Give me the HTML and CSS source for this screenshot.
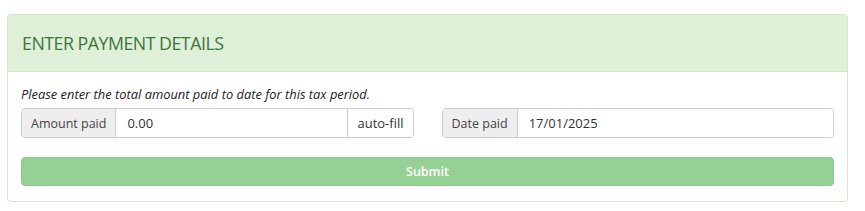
FILE: index.html
```html
<!DOCTYPE html>
<html>
<head>
  <title>Payment Details</title>
  <link rel="stylesheet" href="styles.css">
</head>
<body>

  <div class="panel">
    <div class="panel-heading">
      <h3>ENTER PAYMENT DETAILS</h3>
    </div>
    <div class="panel-body">
      <p class="hint">Please enter the total amount paid to date for this tax period.</p>
      <div class="row">
        <div class="input-group">
          <span class="addon">Amount paid</span>
          <input class="field" type="text" value="0.00">
          <span class="addon addon-btn">auto-fill</span>
        </div>
        <div class="input-group">
          <span class="addon">Date paid</span>
          <input class="field" type="text" value="17/01/2025">
        </div>
      </div>
      <button class="submit-btn">Submit</button>
    </div>
  </div>

</body>
</html>
```

FILE: styles.css
```css
body {
  margin: 0;
  background: #fff;
  color: #333;
  font-family: 'Open Sans', 'Noto Sans', sans-serif;
  font-size: 13px;
}

.panel {
  margin: 14px 17px 0 7px;
  border: 1px solid #d6e9c6;
  border-radius: 4px;
  background: #fff;
}

.panel-heading {
  background: #dff0d8;
  border-bottom: 1px solid #d6e9c6;
  border-radius: 3px 3px 0 0;
  height: 56px;
  padding: 0 14px;
  display: flex;
  align-items: center;
}

.panel-heading h3 {
  margin: 0;
  font-size: 17.8px;
  font-weight: 400;
  color: #3c763d;
  letter-spacing: -0.5px;
}

.panel-body {
  padding: 14px 13px 15px 13px;
}

.hint {
  margin: 0 0 6px;
  font-style: italic;
  font-size: 12.9px;
  color: #222;
  line-height: 16px;
}

.row {
  display: grid;
  grid-template-columns: 1fr 1fr;
  gap: 28px;
}

.input-group {
  display: flex;
  height: 30px;
  border: 1px solid #ccc;
  border-radius: 4px;
  box-sizing: border-box;
  overflow: hidden;
}

.addon {
  display: flex;
  align-items: center;
  padding: 0 9px;
  background: #eee;
  color: #444;
  border-right: 1px solid #ccc;
  white-space: nowrap;
  font-size: 12.5px;
}

.addon-btn {
  background: #fff;
  color: #333;
  border-right: none;
  border-left: 1px solid #ccc;
  padding: 0 9px;
  font-size: 13px;
}

.field {
  flex: 1;
  min-width: 0;
  border: none;
  outline: none;
  padding: 0 11px;
  font: inherit;
  color: #333;
}

.submit-btn {
  display: block;
  width: 100%;
  height: 29px;
  margin-top: 19px;
  background: #95d095;
  border: 1px solid #89c98a;
  border-radius: 4px;
  color: #fff;
  font: inherit;
  font-weight: 600;
  font-size: 12.5px;
}
```
